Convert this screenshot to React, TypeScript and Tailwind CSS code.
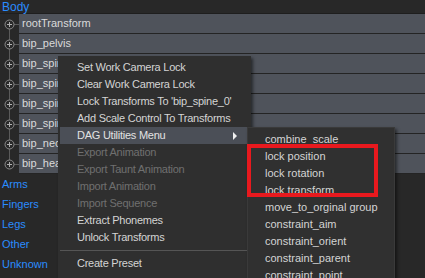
import React from 'react'

const rows = ['rootTransform', 'bip_pelvis', 'bip_spine_0', 'bip_spine_1', 'bip_spine_2', 'bip_spine_3', 'bip_neck_0', 'bip_head_0']
const groups = ['Arms', 'Fingers', 'Legs', 'Other', 'Unknown']

const menu: { label: string; disabled?: boolean; active?: boolean }[] = [
  { label: 'Set Work Camera Lock' },
  { label: 'Clear Work Camera Lock' },
  { label: "Lock Transforms To 'bip_spine_0'" },
  { label: 'Add Scale Control To Transforms' },
  { label: 'DAG Utilities Menu', active: true },
  { label: 'Export Animation', disabled: true },
  { label: 'Export Taunt Animation', disabled: true },
  { label: 'Import Animation', disabled: true },
  { label: 'Import Sequence', disabled: true },
  { label: 'Extract Phonemes' },
  { label: 'Unlock Transforms' },
]

const submenu = [
  'combine_scale',
  'lock position',
  'lock rotation',
  'lock transform',
  'move_to_orginal group',
  'constraint_aim',
  'constraint_orient',
  'constraint_parent',
  'constraint_point',
]

const PlusNode = ({ first, last }: { first: boolean; last: boolean }) => (
  <svg width="19" height="20" viewBox="0 0 19 20" className="shrink-0">
    <line x1="9.5" y1={first ? 10 : 0} x2="9.5" y2={last ? 10 : 20} stroke="#5a5a5a" />
    <line x1="14" y1="10.5" x2="19" y2="10.5" stroke="#5a5a5a" />
    <circle cx="9.5" cy="10.5" r="4.5" fill="#2a2a2a" stroke="#8a8a8a" />
    <line x1="7" y1="10.5" x2="12" y2="10.5" stroke="#b0b0b0" />
    <line x1="9.5" y1="8" x2="9.5" y2="13" stroke="#b0b0b0" />
  </svg>
)

export default function App() {
  return (
    <div
      className="relative w-[425px] h-[278px] overflow-hidden bg-[#282828] text-[11px] leading-none"
      style={{ fontFamily: '"Liberation Sans", Arial, sans-serif' }}
    >
      <div className="h-[14px] pl-[2px] flex items-center text-[#2a8cff] text-[12px] border-b border-[#1e1e1e]">Body</div>
      <div className="flex flex-col">
        {rows.map((r, i) => (
          <div key={r} className="flex h-[20px]">
            <PlusNode first={i === 0} last={i === rows.length - 1} />
            <div className="flex-1 flex items-center pl-[3px] bg-[#4f535b] border-b border-[#242424] text-[#dadada]">
              {r}
            </div>
          </div>
        ))}
      </div>
      <div className="flex flex-col">
        {groups.map(g => (
          <div key={g} className="h-[20px] flex items-center pl-[2px] text-[#2a8cff]">
            {g}
          </div>
        ))}
      </div>

      {/* context menu */}
      <div className="absolute left-[58px] top-[56px] w-[193px] h-[230px] bg-[#2f2f2f] shadow-[2px_2px_3px_rgba(0,0,0,0.5)] pt-[3px] tracking-[-0.25px]">
        {menu.map(m => (
          <div
            key={m.label}
            className={`relative h-[17px] flex items-center pl-[17px] mx-[2px] whitespace-nowrap ${
              m.active ? 'bg-[#4b4f57] text-[#e2e2e2]' : m.disabled ? 'text-[#6f6f6f]' : 'text-[#d4d4d4]'
            }`}
          >
            {m.label}
            {m.active && (
              <svg width="5" height="8" viewBox="0 0 5 8" className="absolute left-[173px] top-[5px]">
                <path d="M0 0 L4 4 L0 8 Z" fill="#f0f0f0" />
              </svg>
            )}
          </div>
        ))}
        <div className="mx-[2px] my-[4px] h-px bg-[#555]" />
        <div className="h-[17px] flex items-center pl-[17px] mx-[2px] text-[#d4d4d4]">Create Preset</div>
      </div>

      {/* submenu */}
      <div className="absolute left-[247px] top-[127px] w-[148px] h-[160px] bg-[#303030] border border-[#3a3a3a] shadow-[2px_2px_3px_rgba(0,0,0,0.5)] pt-[3px]">
        {submenu.map(s => (
          <div key={s} className="h-[17px] flex items-center pl-[17px] text-[#d4d4d4] whitespace-nowrap">
            {s}
          </div>
        ))}
      </div>

      {/* highlight box */}
      <div className="absolute left-[247px] top-[144px] w-[131px] h-[53px] border-4 border-[#e8191e]" />
    </div>
  )
}
